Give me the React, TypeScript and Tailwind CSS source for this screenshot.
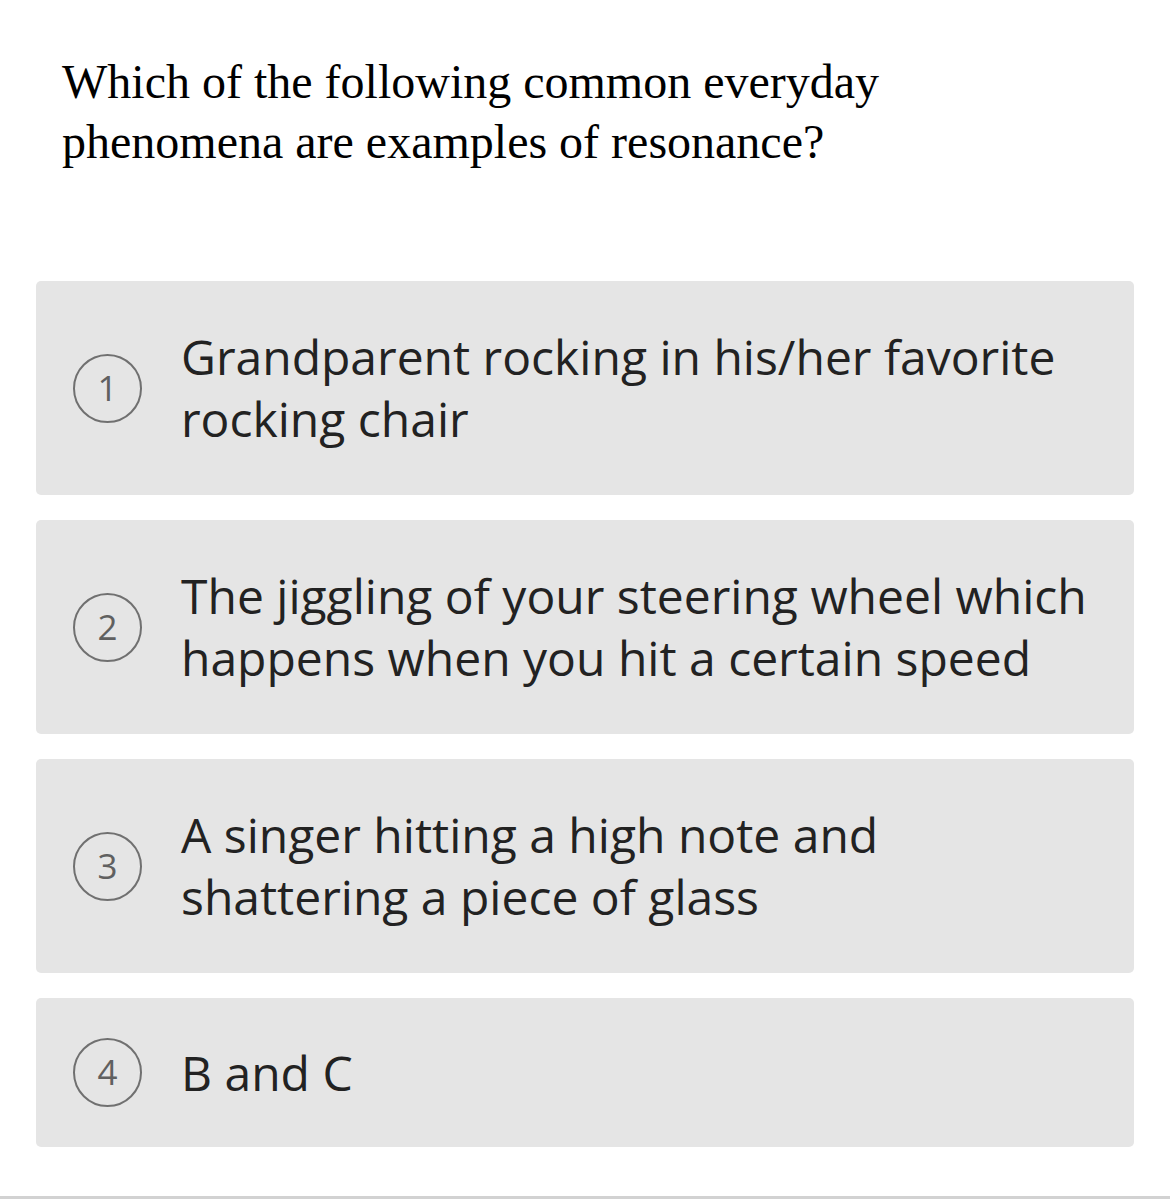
import React from "react";

const options = [
  { n: "1", text: "Grandparent rocking in his/her favorite rocking chair", tall: true },
  { n: "2", text: "The jiggling of your steering wheel which happens when you hit a certain speed", tall: true },
  { n: "3", text: "A singer hitting a high note and shattering a piece of glass", tall: true },
  { n: "4", text: "B and C", tall: false },
];

export default function App() {
  return (
    <div className="w-[1170px] h-[1201px] bg-white relative overflow-hidden">
      <div className="px-[62px] pt-[52px] h-[281px]">
        <p
          className="text-[48px] leading-[60px] text-black w-[840px]"
          style={{ fontFamily: '"Liberation Serif", "Times New Roman", serif' }}
        >
          Which of the following common everyday phenomena are examples of resonance?
        </p>
      </div>
      <div className="px-[36px] flex flex-col gap-[25px]">
        {options.map((o) => (
          <div
            key={o.n}
            className={`bg-[#e5e5e5] rounded-[5px] flex items-center pl-[37px] pr-[20px] ${o.tall ? "h-[214px]" : "h-[149px]"}`}
          >
            <div
              className="w-[69px] h-[69px] shrink-0 rounded-full border-[2.5px] border-[#707070] flex items-center justify-center text-[35px] text-[#606060]"
              style={{ fontFamily: '"Open Sans", sans-serif' }}
            >
              {o.n}
            </div>
            <div
              className="ml-[39px] text-[48px] leading-[62px] text-[#222222] w-[915px]"
              style={{ fontFamily: '"Open Sans", sans-serif' }}
            >
              {o.text}
            </div>
          </div>
        ))}
      </div>
      <div className="absolute left-0 right-0 top-[1196px] h-[3px] bg-[#d2d2d2]" />
    </div>
  );
}
